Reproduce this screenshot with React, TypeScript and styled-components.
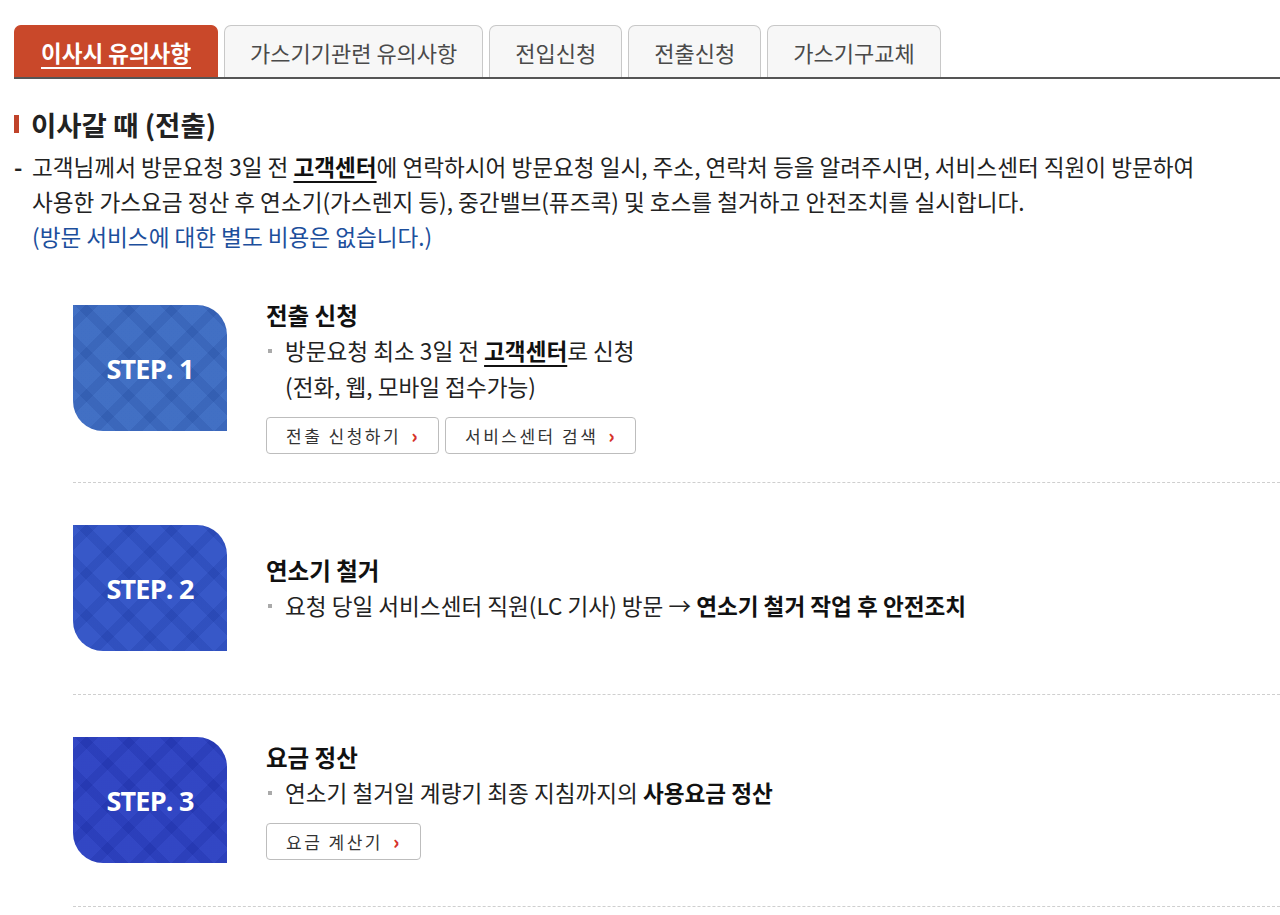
import React from "react";
import styled, { createGlobalStyle } from "styled-components";

const GlobalStyle = createGlobalStyle`
  html, body { margin: 0; padding: 0; background: #fff; }
  body { font-family: "Noto Sans CJK KR", "Noto Sans", sans-serif; color: #222; }
`;

const Page = styled.div`
  padding: 25px 0 0 14px;
`;

const TabBar = styled.ul`
  display: flex;
  gap: 6px;
  margin: 0;
  padding: 0;
  list-style: none;
  border-bottom: 2px solid #555;
`;

const Tab = styled.li<{ $active?: boolean }>`
  height: 52px;
  box-sizing: border-box;
  display: flex;
  align-items: center;
  justify-content: center;
  padding: 0 ${(p) => (p.$active ? "26px" : "25px")};
  border-radius: 7px 7px 0 0;
  border: 1px solid ${(p) => (p.$active ? "#c9482a" : "#c8c8c8")};
  border-bottom: none;
  background: ${(p) => (p.$active ? "#c9482a" : "#f7f7f7")};
  color: ${(p) => (p.$active ? "#fff" : "#4a4a4a")};
  font-size: ${(p) => (p.$active ? "22.5px" : "22px")};
  font-weight: ${(p) => (p.$active ? 700 : 400)};
  text-decoration: ${(p) => (p.$active ? "underline" : "none")};
  text-underline-offset: 5px;
  text-decoration-thickness: 2px;
  white-space: nowrap;
`;

const Heading = styled.h2`
  display: flex;
  align-items: center;
  gap: 12px;
  margin: 28px 0 0;
  font-size: 27.5px;
  font-weight: 700;
  color: #222;
  line-height: 34px;
  &::before {
    content: "";
    width: 5px;
    height: 18px;
    background: #c0432a;
  }
`;

const Notice = styled.div`
  position: relative;
  margin-top: 8px;
  padding-left: 18px;
  font-size: 22.6px;
  line-height: 35px;
  color: #222;
  white-space: nowrap;
  &::before {
    content: "-";
    position: absolute;
    left: 0;
    top: 0;
    font-weight: 700;
  }
`;

const Strong = styled.b<{ $underline?: boolean }>`
  font-weight: 700;
  color: #111;
  text-decoration: ${(p) => (p.$underline ? "underline" : "none")};
  text-underline-offset: 5px;
  text-decoration-thickness: 2px;
`;

const Note = styled.span`
  color: #1d4f9c;
`;

const Steps = styled.div`
  margin: 2px 0 0 59px;
`;

const StepRow = styled.div<{ $tight?: boolean }>`
  display: flex;
  align-items: center;
  gap: 39px;
  padding: 42px 0 ${(p) => (p.$tight ? "28px" : "43px")};
  border-bottom: 1px dashed #cfcfcf;
`;

const StepBadge = styled.div<{ $color: string; $lift?: boolean }>`
  flex: none;
  width: 154px;
  height: 126px;
  margin-bottom: ${(p) => (p.$lift ? "16px" : "0")};
  border-radius: 0 30px 0 30px;
  background-color: ${(p) => p.$color};
  background-image:
    repeating-linear-gradient(45deg, rgba(0, 0, 50, 0.055) 0 9px, rgba(255, 255, 255, 0.02) 9px 30px),
    repeating-linear-gradient(-45deg, rgba(0, 0, 50, 0.055) 0 9px, rgba(255, 255, 255, 0.02) 9px 30px);
  display: flex;
  align-items: center;
  justify-content: center;
  color: #fff;
  font-family: "Open Sans", "Noto Sans", sans-serif;
  font-weight: 700;
  font-size: 27px;
  letter-spacing: -0.8px;
`;

const StepBody = styled.div`
  display: flex;
  flex-direction: column;
`;

const StepTitle = styled.h3`
  margin: 0;
  font-size: 23.5px;
  font-weight: 700;
  line-height: 35px;
  color: #111;
`;

const Bullet = styled.p`
  position: relative;
  margin: 0;
  padding-left: 19px;
  font-size: 22.6px;
  line-height: 36px;
  color: #222;
  white-space: nowrap;
  &::before {
    content: "";
    position: absolute;
    left: 2px;
    top: 16px;
    width: 4px;
    height: 4px;
    background: #aaa;
  }
`;

const ButtonRow = styled.div`
  display: flex;
  gap: 6px;
  margin-top: 12px;
`;

const LinkButton = styled.a`
  display: inline-flex;
  align-items: center;
  gap: 10px;
  height: 37px;
  box-sizing: border-box;
  padding: 0 18px 0 19px;
  border: 1px solid #bdbdbd;
  border-radius: 4px;
  background: #fff;
  color: #333;
  font-size: 17px;
  letter-spacing: 2.5px;
  text-decoration: none;
  &::after {
    content: "›";
    color: #d6322a;
    font-weight: 900;
    font-size: 19px;
    line-height: 1;
    margin-top: -2px;
  }
`;

const tabs = ["이사시 유의사항", "가스기기관련 유의사항", "전입신청", "전출신청", "가스기구교체"];

export default function App() {
  return (
    <>
      <GlobalStyle />
      <Page>
        <TabBar>
          {tabs.map((t, i) => (
            <Tab key={t} $active={i === 0}>
              {t}
            </Tab>
          ))}
        </TabBar>

        <Heading>이사갈 때 (전출)</Heading>
        <Notice>
          고객님께서 방문요청 3일 전 <Strong $underline>고객센터</Strong>에 연락하시어 방문요청 일시, 주소, 연락처 등을
          알려주시면, 서비스센터 직원이 방문하여
          <br />
          사용한 가스요금 정산 후 연소기(가스렌지 등), 중간밸브(퓨즈콕) 및 호스를 철거하고 안전조치를 실시합니다.
          <br />
          <Note>(방문 서비스에 대한 별도 비용은 없습니다.)</Note>
        </Notice>

        <Steps>
          <StepRow $tight>
            <StepBadge $color="#3a6ac2" $lift>
              STEP. 1
            </StepBadge>
            <StepBody>
              <StepTitle>전출 신청</StepTitle>
              <Bullet>
                방문요청 최소 3일 전 <Strong $underline>고객센터</Strong>로 신청
                <br />
                (전화, 웹, 모바일 접수가능)
              </Bullet>
              <ButtonRow>
                <LinkButton>전출 신청하기</LinkButton>
                <LinkButton>서비스센터 검색</LinkButton>
              </ButtonRow>
            </StepBody>
          </StepRow>

          <StepRow>
            <StepBadge $color="#2f52c6">STEP. 2</StepBadge>
            <StepBody>
              <StepTitle>연소기 철거</StepTitle>
              <Bullet>
                요청 당일 서비스센터 직원(LC 기사) 방문 → <Strong>연소기 철거 작업 후 안전조치</Strong>
              </Bullet>
            </StepBody>
          </StepRow>

          <StepRow>
            <StepBadge $color="#2a3fc2">STEP. 3</StepBadge>
            <StepBody>
              <StepTitle>요금 정산</StepTitle>
              <Bullet>
                연소기 철거일 계량기 최종 지침까지의 <Strong>사용요금 정산</Strong>
              </Bullet>
              <ButtonRow>
                <LinkButton>요금 계산기</LinkButton>
              </ButtonRow>
            </StepBody>
          </StepRow>
        </Steps>
      </Page>
    </>
  );
}
